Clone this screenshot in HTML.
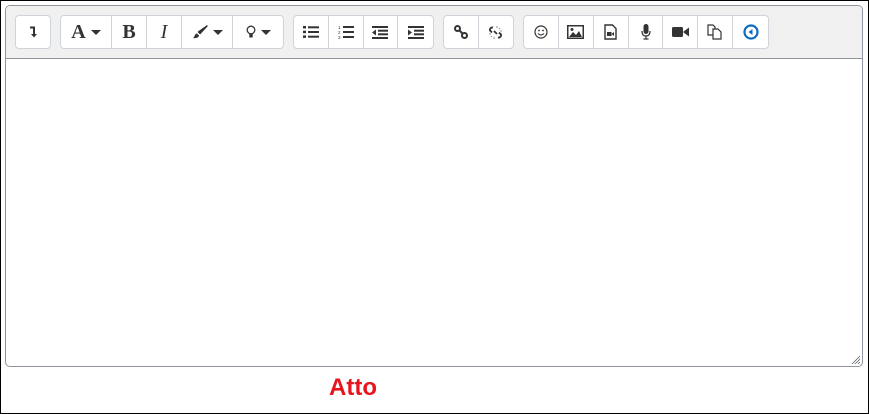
<!DOCTYPE html>
<html><head><meta charset="utf-8"><style>
*{margin:0;padding:0;box-sizing:border-box}
body{width:869px;height:414px;background:#fff;position:relative;overflow:hidden;font-family:"Liberation Sans",sans-serif}
.frame{position:absolute;left:0;top:0;width:869px;height:414px;border:1px solid #000}
.ed{position:absolute;left:5px;top:5px;width:858px;height:362px;border:1px solid #8f959e;border-radius:5px;overflow:hidden;background:#fff}
.tb{position:absolute;left:0;top:0;width:100%;height:53px;background:#f0f0f0;border-bottom:1px solid #8f959e}
.g{position:absolute;top:9px;height:34px;border:1px solid #ced4da;border-radius:4px;background:#fff;display:flex;overflow:hidden}
.b{height:32px;border-right:1px solid #ced4da;display:flex;align-items:center;justify-content:center;color:#333}
.b:last-child{border-right:none}
.caret{display:inline-block;width:0;height:0;border-left:5px solid transparent;border-right:5px solid transparent;border-top:5px solid #333;margin-left:5px}
.atto{position:absolute;left:329px;top:374px;color:#e8141e;font-weight:bold;font-size:24px}
.grip{position:absolute;right:2px;bottom:2px}
</style></head><body>
<div class="frame"></div>
<div class="ed">
<div class="tb">
 <div class="g" style="left:9px;width:36px"><div class="b" style="width:34px"><svg width="10" height="12" viewBox="0 0 10 12"><path d="M2 1.5H6V10" stroke="#333" stroke-width="2" fill="none"/><path d="M3 8L6 11.5L9 8Z" fill="#333"/></svg></div></div>
 <div class="g" style="left:54px;width:224px">
  <div class="b" style="width:51px;font-family:'Liberation Serif',serif;font-size:20px;font-weight:bold">A<span class="caret"></span></div>
  <div class="b" style="width:35px;font-family:'Liberation Serif',serif;font-size:20px;font-weight:bold">B</div>
  <div class="b" style="width:35px;font-family:'Liberation Serif',serif;font-size:20px;font-style:italic">I</div>
  <div class="b" style="width:51px"><svg width="16" height="14" viewBox="0 0 16 14"><path d="M15 1L8 8.5L6.5 7Z" fill="#333" stroke="#333" stroke-width="1.5" stroke-linejoin="round"/><path d="M5 8.5C2.5 8.5 3 12 1 13C4 13.5 7 12.5 7 10.5Z" fill="#333"/></svg><span class="caret"></span></div>
  <div class="b" style="width:50px"><svg width="10" height="14" viewBox="0 0 10 14"><circle cx="5" cy="5" r="3.8" fill="none" stroke="#333" stroke-width="1.3"/><rect x="3.3" y="9" width="3.4" height="3.5" fill="#333"/></svg><span class="caret"></span></div>
 </div>
 <div class="g" style="left:287px;width:141px">
  <div class="b" style="width:35px"><svg width="16" height="12" viewBox="0 0 16 12"><g fill="#333"><rect x="0" y="0" width="3" height="2.5"/><rect x="0" y="4.7" width="3" height="2.5"/><rect x="0" y="9.4" width="3" height="2.5"/><rect x="5" y="0.3" width="11" height="2"/><rect x="5" y="5" width="11" height="2"/><rect x="5" y="9.7" width="11" height="2"/></g></svg></div>
  <div class="b" style="width:35px"><svg width="16" height="14" viewBox="0 0 16 14"><g fill="#333"><text x="0" y="4" font-size="4.5" font-family="Liberation Sans">1</text><text x="0" y="9" font-size="4.5" font-family="Liberation Sans">2</text><text x="0" y="14" font-size="4.5" font-family="Liberation Sans">3</text><rect x="5" y="1" width="11" height="2"/><rect x="5" y="6" width="11" height="2"/><rect x="5" y="11" width="11" height="2"/></g></svg></div>
  <div class="b" style="width:35px"><svg width="16" height="13" viewBox="0 0 16 13"><g fill="#333"><rect x="0" y="0" width="16" height="2"/><rect x="6" y="3.7" width="10" height="2"/><rect x="6" y="7.3" width="10" height="2"/><rect x="0" y="11" width="16" height="2"/><path d="M0 6.5L4 3.5V9.5Z"/></g></svg></div>
  <div class="b" style="width:35px"><svg width="16" height="13" viewBox="0 0 16 13"><g fill="#333"><rect x="0" y="0" width="16" height="2"/><rect x="6" y="3.7" width="10" height="2"/><rect x="6" y="7.3" width="10" height="2"/><rect x="0" y="11" width="16" height="2"/><path d="M4 6.5L0 3.5V9.5Z"/></g></svg></div>
 </div>
 <div class="g" style="left:437px;width:71px">
  <div class="b" style="width:35px"><svg width="14" height="14" viewBox="0 0 14 14"><g fill="none" stroke="#333" stroke-width="2"><rect x="1" y="1" width="5" height="5" rx="2.5"/><rect x="8" y="8" width="5" height="5" rx="2.5"/><path d="M5 5L9 9"/></g></svg></div>
  <div class="b" style="width:35px"><svg width="15" height="15" viewBox="0 0 15 15"><g fill="none" stroke="#333" stroke-width="1.8"><path d="M5 2.5A2.5 2.5 0 0 0 2 5.5L4 7.5"/><path d="M10 12.5A2.5 2.5 0 0 0 13 9.5L11 7.5"/><path d="M6 6L9 9"/></g><g stroke="#777" stroke-width="0.8"><path d="M9 1V3M12 3L11 4M14 6H12M1 9H3M3 12L4 11M6 14V12"/></g></svg></div>
 </div>
 <div class="g" style="left:517px;width:246px">
  <div class="b" style="width:35px"><svg width="14" height="14" viewBox="0 0 14 14"><circle cx="7" cy="7" r="6" fill="none" stroke="#333" stroke-width="1.2"/><circle cx="5" cy="5.5" r="0.9" fill="#333"/><circle cx="9" cy="5.5" r="0.9" fill="#333"/><path d="M4 8.5Q7 11.5 10 8.5" fill="none" stroke="#333" stroke-width="1.1"/></svg></div>
  <div class="b" style="width:35px"><svg width="17" height="14" viewBox="0 0 17 14"><rect x="0.75" y="0.75" width="15.5" height="12.5" fill="none" stroke="#333" stroke-width="1.5"/><path d="M2 12L6 7L9 10L12 6L15 12Z" fill="#333"/><circle cx="5" cy="4.5" r="1.5" fill="#333"/></svg></div>
  <div class="b" style="width:35px"><svg width="13" height="16" viewBox="0 0 13 16"><path d="M1 1H8.5L12 4.5V15H1Z" fill="none" stroke="#333" stroke-width="1.4"/><rect x="3" y="8" width="4.5" height="4" fill="#333"/><path d="M7.5 10L10 8V12Z" fill="#333"/></svg></div>
  <div class="b" style="width:35px"><svg width="10" height="16" viewBox="0 0 10 16"><rect x="2.5" y="0" width="5" height="10" rx="2.5" fill="#333"/><path d="M1 7Q1 12 5 12Q9 12 9 7" fill="none" stroke="#333" stroke-width="1.2"/><path d="M5 12V15M2.5 15H7.5" stroke="#333" stroke-width="1.2"/></svg></div>
  <div class="b" style="width:35px"><svg width="17" height="12" viewBox="0 0 17 12"><rect x="0" y="1" width="11" height="10" rx="1.5" fill="#333"/><path d="M11 6L17 1.5V10.5Z" fill="#333"/></svg></div>
  <div class="b" style="width:35px"><svg width="16" height="16" viewBox="0 0 16 16"><path d="M1 1H6L8 3V11H1Z" fill="#fff" stroke="#333" stroke-width="1.2"/><path d="M6 5H11L14 8V15H6Z" fill="#fff" stroke="#333" stroke-width="1.2"/></svg></div>
  <div class="b" style="width:35px"><svg width="16" height="16" viewBox="0 0 16 16"><circle cx="8" cy="8" r="6.5" fill="none" stroke="#0f6cbf" stroke-width="2.2"/><path d="M5.5 8L9.5 5V11Z" fill="#0f6cbf"/></svg></div>
 </div>
</div>
<svg class="grip" width="9" height="9" viewBox="0 0 9 9"><path d="M1 9L9 1M4 9L9 4M7 9L9 7" stroke="#666" stroke-width="0.8"/></svg>
</div>
<div class="atto">Atto</div>
</body></html>
